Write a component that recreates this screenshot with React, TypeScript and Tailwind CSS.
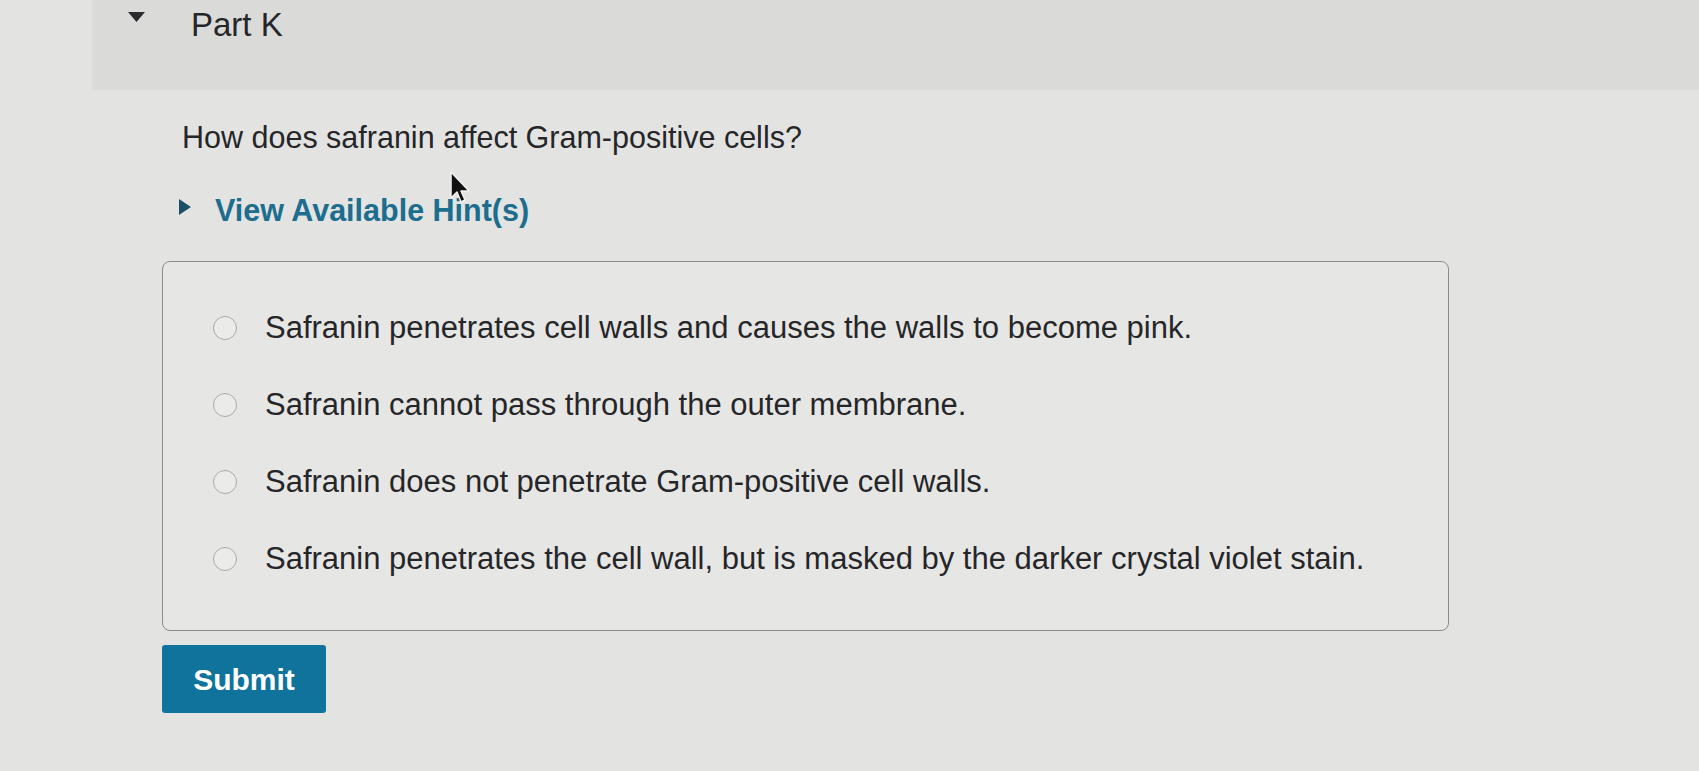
import { useState } from 'react';

const options = [
  'Safranin penetrates cell walls and causes the walls to become pink.',
  'Safranin cannot pass through the outer membrane.',
  'Safranin does not penetrate Gram-positive cell walls.',
  'Safranin penetrates the cell wall, but is masked by the darker crystal violet stain.',
];

const App = () => {
  const [selected, setSelected] = useState<number | null>(null);

  return (
    <div className="relative min-h-screen w-full overflow-hidden bg-[#e3e4e2] font-['Liberation_Sans',Arial,sans-serif] text-[#262629]">
      {/* part header */}
      <div className="ml-[92px] flex h-[90px] items-start bg-[#dadbd9] pl-[36px]">
        <svg width="17" height="10" viewBox="0 0 17 10" className="mt-[12px]">
          <path d="M0 0 L17 0 L8.5 10 Z" fill="#2b2b2e" />
        </svg>
        <h2 className="ml-[46px] text-[33px] leading-normal">Part K</h2>
      </div>

      <div className="pl-[162px] pt-[32px]">
        <p className="ml-[20px] text-[30.5px] leading-[30px]">How does safranin affect Gram-positive cells?</p>

        <button className="ml-[17px] mt-[43px] flex items-center text-[30.5px] font-bold leading-[30px] text-[#1c6d8e]">
          <svg width="12" height="16" viewBox="0 0 12 16" className="-mt-[6px]">
            <path d="M0 0 L12 8 L0 16 Z" fill="#1d4f66" />
          </svg>
          <span className="ml-[24px]">View Available Hint(s)</span>
        </button>

        <div className="mt-[36px] w-[1287px] rounded-[8px] border-[1.5px] border-[#8c8c8c] bg-[#e6e7e5] pb-[33px] pl-[50px] pt-[27px]">
          {options.map((text, i) => (
            <label key={i} className="flex h-[77px] cursor-pointer items-center" onClick={() => setSelected(i)}>
              <span className="flex h-[24px] w-[24px] shrink-0 items-center justify-center rounded-full border-[1.5px] border-[#a9a9a9] bg-[#ebebea]">
                {selected === i && <span className="h-[10px] w-[10px] rounded-full bg-[#1c6d8e]" />}
              </span>
              <span className="ml-[28px] text-[31px] leading-[30px]">{text}</span>
            </label>
          ))}
        </div>

        <button className="mt-[14px] flex h-[68px] w-[164px] items-center justify-center rounded-[3px] bg-[#0f739b] text-[30px] font-bold text-white">
          Submit
        </button>
      </div>

      {/* mouse pointer */}
      <svg width="24" height="34" viewBox="0 0 24 34" className="absolute left-[450px] top-[171px]">
        <path d="M1 1 L1 27 L7 21 L11 31 L15 29 L11 20 L19 20 Z" fill="#111" stroke="#f2f2f2" strokeWidth="1.5" strokeLinejoin="round" />
      </svg>
    </div>
  );
};

export default App;
